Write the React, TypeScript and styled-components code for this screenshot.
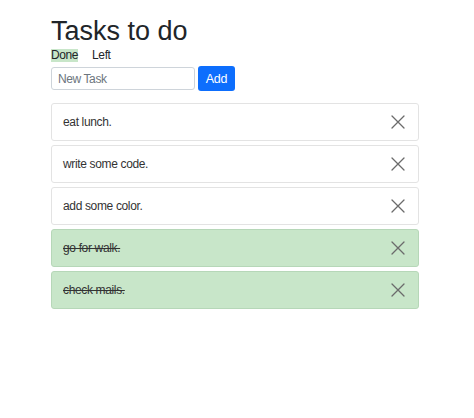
import styled, { createGlobalStyle } from "styled-components";

interface Task {
  id: number;
  text: string;
  done: boolean;
}

const tasks: Task[] = [
  { id: 1, text: "eat lunch.", done: false },
  { id: 2, text: "write some code.", done: false },
  { id: 3, text: "add some color.", done: false },
  { id: 4, text: "go for walk.", done: true },
  { id: 5, text: "check mails.", done: true },
];

const CloseIcon = () => (
  <svg width="14" height="14" viewBox="0 0 14 14" fill="none">
    <path d="M1 1L13 13M13 1L1 13" stroke="#6b6b6b" strokeWidth="1.3" strokeLinecap="round" />
  </svg>
);

export default function App() {
  return (
    <>
      <GlobalStyle />
      <Container>
        <Title>Tasks to do</Title>
        <Filters>
          <Filter $active>Done</Filter>
          <Filter>Left</Filter>
        </Filters>
        <AddForm>
          <TaskInput placeholder="New Task" />
          <AddBtn>Add</AddBtn>
        </AddForm>
        <List>
          {tasks.map((task) => (
            <Item key={task.id} $done={task.done}>
              <ItemText $done={task.done}>{task.text}</ItemText>
              <RemoveBtn aria-label="remove">
                <CloseIcon />
              </RemoveBtn>
            </Item>
          ))}
        </List>
      </Container>
    </>
  );
}

const GlobalStyle = createGlobalStyle`
  body {
    margin: 0;
    background: #ffffff;
    font-family: "Liberation Sans", Arial, sans-serif;
    color: #212529;
  }
`;

const Container = styled.div`
  width: 368px;
  padding-top: 14px;
  margin-left: 51px;
`;

const Title = styled.h1`
  margin: 0;
  font-size: 27px;
  font-weight: 400;
  line-height: 34px;
  color: #212529;
`;

const Filters = styled.div`
  display: flex;
  gap: 14px;
  margin-top: 1px;
`;

const Filter = styled.span<{ $active?: boolean }>`
  font-size: 12px;
  letter-spacing: -0.4px;
  line-height: 13px;
  background: ${({ $active }) => ($active ? "#c8e6c9" : "transparent")};
  color: #212529;
`;

const AddForm = styled.form`
  display: flex;
  align-items: center;
  gap: 3px;
  margin-top: 4px;
`;

const TaskInput = styled.input`
  width: 144px;
  height: 23px;
  box-sizing: border-box;
  border: 1px solid #ced4da;
  border-radius: 3px;
  padding: 0 6px;
  font-family: inherit;
  font-size: 12px;
  letter-spacing: -0.4px;
  color: #212529;
  &::placeholder {
    color: #6c757d;
  }
`;

const AddBtn = styled.button`
  width: 37px;
  height: 25px;
  border: none;
  border-radius: 3px;
  background: #0d6efd;
  color: #ffffff;
  font-family: inherit;
  font-size: 12.5px;
  letter-spacing: -0.3px;
  cursor: pointer;
`;

const List = styled.div`
  display: flex;
  flex-direction: column;
  gap: 4px;
  margin-top: 12px;
`;

const Item = styled.div<{ $done: boolean }>`
  display: flex;
  align-items: center;
  justify-content: space-between;
  height: 38px;
  box-sizing: border-box;
  padding: 0 13px 0 11px;
  border: 1px solid ${({ $done }) => ($done ? "#b6d7b8" : "#e3e3e3")};
  border-radius: 3px;
  background: ${({ $done }) => ($done ? "#c8e6c9" : "#ffffff")};
`;

const ItemText = styled.span<{ $done: boolean }>`
  font-size: 12px;
  letter-spacing: -0.35px;
  color: #333333;
  text-decoration: ${({ $done }) => ($done ? "line-through" : "none")};
`;

const RemoveBtn = styled.button`
  display: flex;
  padding: 0;
  border: none;
  background: none;
  cursor: pointer;
`;
